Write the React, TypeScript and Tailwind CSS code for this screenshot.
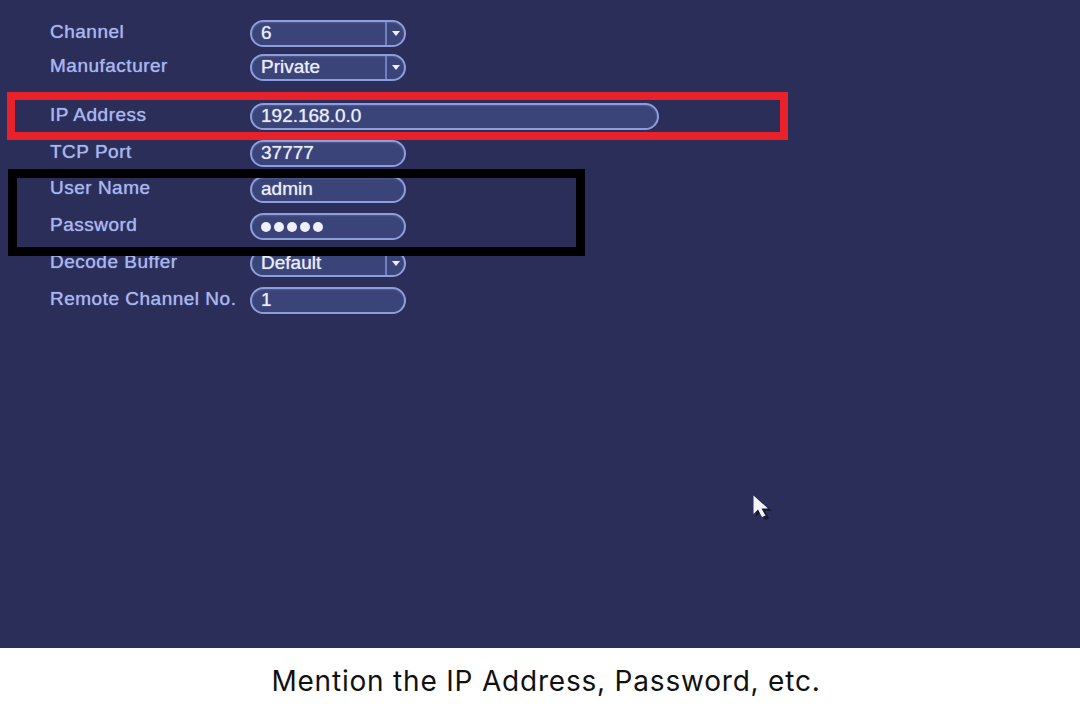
import React from "react";

const labelCls =
  "w-[200px] shrink-0 text-[19px] tracking-[0.5px] text-[#a9b6ef] leading-none mb-[4px] [text-shadow:0_0_1px_rgba(169,182,239,0.9)]";
const fieldText = "text-[19px] text-[#e9ecfb] leading-none [text-shadow:0_0_1px_rgba(233,236,251,0.8)]";

function Pill({
  w = 156,
  dropdown = false,
  children,
}: {
  w?: number;
  dropdown?: boolean;
  children?: React.ReactNode;
}) {
  return (
    <div
      className="flex h-[27px] items-center rounded-full border-2 border-[#8e9ddb] bg-[#3a4479] pl-[9px] shadow-[inset_0_1px_2px_rgba(255,255,255,0.12)]"
      style={{ width: w }}
    >
      <div className="flex-1 overflow-hidden whitespace-nowrap">{children}</div>
      {dropdown && (
        <div className="flex h-full w-[19px] items-center justify-center border-l-2 border-[#6f7fc2]">
          <svg width="8" height="5" viewBox="0 0 8 5">
            <path d="M0 0 H8 L4 5 Z" fill="#eef0ff" />
          </svg>
        </div>
      )}
    </div>
  );
}

function Row({
  label,
  mt,
  children,
}: {
  label: string;
  mt: string;
  children: React.ReactNode;
}) {
  return (
    <div className={`flex items-center ${mt}`}>
      <div className={labelCls}>{label}</div>
      {children}
    </div>
  );
}

export default function App() {
  return (
    <div
      className="relative w-[1080px] h-[720px] overflow-hidden bg-white"
      style={{ fontFamily: '"Liberation Sans", Arial, sans-serif' }}
    >
      <div className="relative h-[648px] bg-[#2a2e59] pl-[50px] pt-[20px]">
        <div className="flex flex-col">
          <Row label="Channel" mt="mt-0">
            <Pill dropdown>
              <span className={fieldText}>6</span>
            </Pill>
          </Row>
          <Row label="Manufacturer" mt="mt-[7px]">
            <Pill dropdown>
              <span className={fieldText}>Private</span>
            </Pill>
          </Row>
          <Row label="IP Address" mt="mt-[22px]">
            <Pill w={409}>
              <span className={fieldText}>192.168.0.0</span>
            </Pill>
          </Row>
          <Row label="TCP Port" mt="mt-[10px]">
            <Pill>
              <span className={fieldText}>37777</span>
            </Pill>
          </Row>
          <Row label="User Name" mt="mt-[9px]">
            <Pill>
              <span className={fieldText}>admin</span>
            </Pill>
          </Row>
          <Row label="Password" mt="mt-[10px]">
            <Pill>
              <div className="flex items-center gap-[3px]">
                <span className="h-[10px] w-[10px] rounded-full bg-[#eef0ff]" />
                <span className="h-[10px] w-[10px] rounded-full bg-[#eef0ff]" />
                <span className="h-[10px] w-[10px] rounded-full bg-[#eef0ff]" />
                <span className="h-[10px] w-[10px] rounded-full bg-[#eef0ff]" />
                <span className="h-[10px] w-[10px] rounded-full bg-[#eef0ff]" />
              </div>
            </Pill>
          </Row>
          <Row label="Decode Buffer" mt="mt-[10px]">
            <Pill dropdown>
              <span className={fieldText}>Default</span>
            </Pill>
          </Row>
          <Row label="Remote Channel No." mt="mt-[10px]">
            <Pill>
              <span className={fieldText}>1</span>
            </Pill>
          </Row>
        </div>

        {/* annotation boxes */}
        <div className="absolute left-[7px] top-[92px] h-[48px] w-[781px] border-[8px] border-[#e8212b]" />
        <div className="absolute left-[8px] top-[169px] h-[87px] w-[577px] border-[9px] border-black" />

        {/* mouse cursor */}
        <svg
          className="absolute left-[752px] top-[494px]"
          width="26"
          height="30"
          viewBox="0 0 26 30"
        >
          <path
            d="M4 4 L4 23 L9 18 L13 26 L17 24.5 L13 17 L20 17 Z"
            fill="#15172f"
            opacity="0.9"
          />
          <path
            d="M1.5 1.5 L1.5 20 L6 15.5 L10 23 L13.5 21.5 L9.5 14.5 L16 14.5 Z"
            fill="#f3f4fb"
          />
        </svg>
      </div>
      <div className="flex h-[72px] items-center justify-center pl-[12px] pb-[6px]">
        <span
          className="text-[28px] tracking-[0.8px] text-[#111]"
          style={{ fontFamily: "Inter, sans-serif" }}
        >
          Mention the IP Address, Password, etc.
        </span>
      </div>
    </div>
  );
}
